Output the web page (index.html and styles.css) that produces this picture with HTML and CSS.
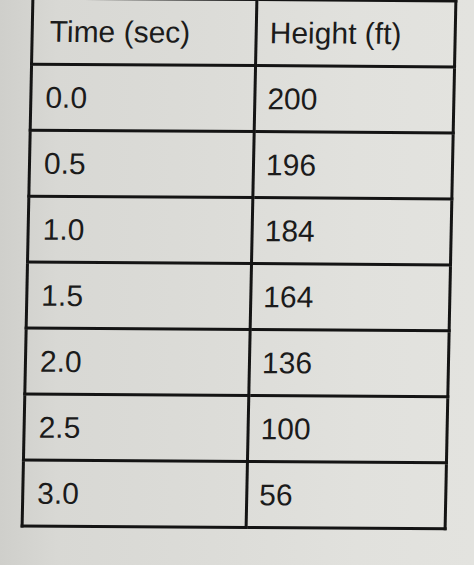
FILE: index.html
```html
<!DOCTYPE html>
<html>
<head>
<meta charset="utf-8">
<link rel="stylesheet" href="styles.css">
</head>
<body>
<div class="sheet">
  <table class="data">
    <thead>
      <tr><th>Time (sec)</th><th>Height (ft)</th></tr>
    </thead>
    <tbody>
      <tr><td>0.0</td><td>200</td></tr>
      <tr><td>0.5</td><td>196</td></tr>
      <tr><td>1.0</td><td>184</td></tr>
      <tr><td>1.5</td><td>164</td></tr>
      <tr><td>2.0</td><td>136</td></tr>
      <tr><td>2.5</td><td>100</td></tr>
      <tr><td>3.0</td><td>56</td></tr>
    </tbody>
  </table>
</div>
</body>
</html>
```

FILE: styles.css
```css
html, body {
  margin: 0;
  padding: 0;
}
body {
  width: 474px;
  height: 565px;
  overflow: hidden;
  background: linear-gradient(90deg, #cfcfcb 0%, #d8d8d4 12%, #dcdcd8 45%, #e1e1dd 75%, #e3e3df 100%);
  font-family: "Liberation Sans", Arial, sans-serif;
  color: #1b1b1b;
}
.sheet {
  padding: 0 0 0 26px;
  margin-top: -2px;
}
.data {
  border-collapse: collapse;
  width: 426px;
  transform: rotate(0.37deg) skewX(-0.8deg);
  transform-origin: 50% 50%;
}
.data th,
.data td {
  border: 3px solid #141414;
  height: 63px;
  padding: 0 11px;
  text-align: left;
  font-size: 30px;
  font-weight: normal;
  line-height: 1;
  vertical-align: middle;
}
.data th {
  padding-left: 12px;
  height: 63px;
}
.data th:first-child {
  padding-left: 16px;
}
.data td:first-child {
  padding-left: 13px;
}
.data th:first-child,
.data td:first-child {
  width: 194px;
}
```
